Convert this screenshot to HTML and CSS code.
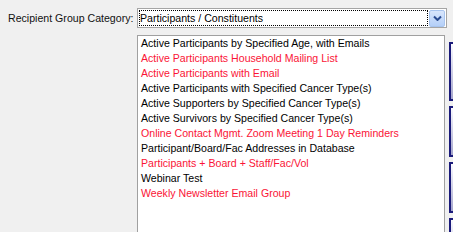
FILE: index.html
```html
<!DOCTYPE html>
<html lang="en">
<head>
    <meta charset="UTF-8">
    <title>Recipient Group Category</title>
    <link rel="stylesheet" href="styles.css">
</head>
<body>
    <div class="form">
        <div class="row">
            <label class="label">Recipient Group Category:</label>
            <div class="combo">
                <div class="combo-value"><span>Participants / Constituents</span></div>
                <div class="combo-btn">
                    <svg width="9" height="6" viewBox="0 0 9 6">
                        <path d="M1 1.5 L4.5 5 L8 1.5" fill="none" stroke="#2b4c91" stroke-width="2"/>
                    </svg>
                </div>
            </div>
        </div>

        <div class="row lists">
            <ul class="listbox">
                <li>Active Participants by Specified Age, with Emails</li>
                <li class="red">Active Participants Household Mailing List</li>
                <li class="red">Active Participants with Email</li>
                <li>Active Participants with Specified Cancer Type(s)</li>
                <li>Active Supporters by Specified Cancer Type(s)</li>
                <li>Active Survivors by Specified Cancer Type(s)</li>
                <li class="red">Online Contact Mgmt. Zoom Meeting 1 Day Reminders</li>
                <li>Participant/Board/Fac Addresses in Database</li>
                <li class="red">Participants + Board + Staff/Fac/Vol</li>
                <li>Webinar Test</li>
                <li class="red">Weekly Newsletter Email Group</li>
            </ul>
            <div class="side-buttons">
                <div class="side-btn first"></div>
                <div class="side-btn"></div>
                <div class="side-btn"></div>
                <div class="side-btn"></div>
            </div>
        </div>
    </div>
</body>
</html>
```

FILE: styles.css
```css
html, body {
    margin: 0;
    padding: 0;
    height: 100%;
    overflow: hidden;
}
body {
    background-color: #f0f0f0;
    font-family: "Liberation Sans", Arial, sans-serif;
    font-size: 10.6px;
    color: #000;
}
.form {
    width: 600px;
    padding: 8px 0 0 8px;
}
.row {
    display: flex;
    align-items: center;
}
.label {
    flex: none;
    width: 129px;
    white-space: nowrap;
    color: #111;
}
.combo {
    flex: none;
    display: flex;
    align-items: center;
    width: 306px;
    height: 18px;
    padding: 0 1px;
    border: 1px solid #a5a5a5;
    background-color: white;
}
.combo-value {
    flex: 1;
    height: 14px;
    margin-right: 1px;
    padding: 0;
    border: 1px dotted #000;
    line-height: 14px;
    white-space: nowrap;
}
.combo-btn {
    flex: none;
    width: 14px;
    height: 15px;
    display: flex;
    align-items: center;
    justify-content: center;
    border: 1px solid #a8c4ee;
    border-radius: 2px;
    background: linear-gradient(#d8e6fc, #b4cff8);
}
.lists {
    align-items: flex-start;
    margin: 7px 0 0 129px;
}
.listbox {
    flex: none;
    width: 303px;
    height: 220px;
    margin: 0;
    padding: 0 0 0 3px;
    list-style: none;
    border: 1px solid #a0a0a0;
    background-color: white;
}
.listbox li {
    height: 15px;
    line-height: 15px;
    white-space: nowrap;
}
.listbox li.red {
    color: #fa1436;
}
.side-buttons {
    flex: none;
    display: flex;
    flex-direction: column;
    gap: 5px;
    margin: 7px 0 0 4px;
    width: 40px;
}
.side-btn {
    height: 47px;
    border: 2px solid #1a1a7a;
    background: linear-gradient(#fafaff, #a4a4cc);
}
.side-btn.first {
    height: 55px;
}
```
